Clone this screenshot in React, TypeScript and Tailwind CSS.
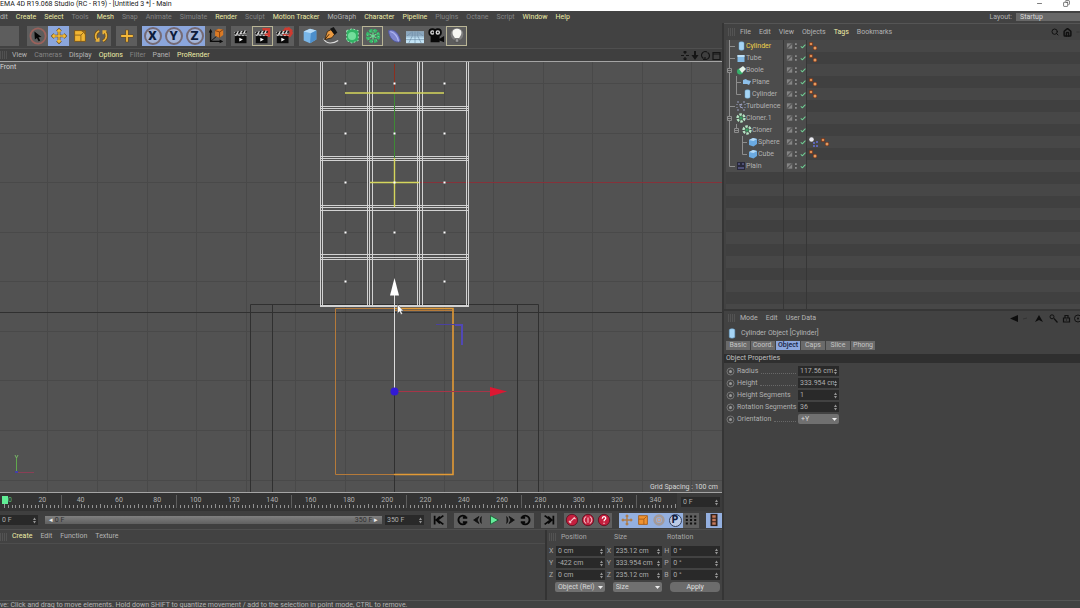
import { useState } from 'react'
import type { ReactNode } from 'react'
import { Check, Copy, House, Minus, Search } from 'lucide-react'
import clsx from 'clsx'

interface MenuEntry {
  label: string
  tone?: 'hot' | 'dim'
}

interface SceneObject {
  name: string
  icon: string
  depth: number
  tags?: string
  open?: boolean
}

const mainMenu: MenuEntry[] = [
  { label: 'Edit' },
  { label: 'Create', tone: 'hot' },
  { label: 'Select', tone: 'hot' },
  { label: 'Tools', tone: 'dim' },
  { label: 'Mesh', tone: 'hot' },
  { label: 'Snap', tone: 'dim' },
  { label: 'Animate', tone: 'dim' },
  { label: 'Simulate', tone: 'dim' },
  { label: 'Render', tone: 'hot' },
  { label: 'Sculpt', tone: 'dim' },
  { label: 'Motion Tracker', tone: 'hot' },
  { label: 'MoGraph' },
  { label: 'Character', tone: 'hot' },
  { label: 'Pipeline', tone: 'hot' },
  { label: 'Plugins', tone: 'dim' },
  { label: 'Octane', tone: 'dim' },
  { label: 'Script', tone: 'dim' },
  { label: 'Window', tone: 'hot' },
  { label: 'Help', tone: 'hot' },
]

const viewMenu: MenuEntry[] = [
  { label: 'View' },
  { label: 'Cameras', tone: 'dim' },
  { label: 'Display' },
  { label: 'Options', tone: 'hot' },
  { label: 'Filter', tone: 'dim' },
  { label: 'Panel' },
  { label: 'ProRender', tone: 'hot' },
]

const sceneObjects: SceneObject[] = [
  { name: 'Cylinder', icon: 'cylinder', depth: 0, tags: 'phong' },
  { name: 'Tube', icon: 'tube', depth: 0, tags: 'phong' },
  { name: 'Boole', icon: 'boole', depth: 0, open: true },
  { name: 'Plane', icon: 'plane', depth: 1, tags: 'phong' },
  { name: 'Cylinder', icon: 'cylinder', depth: 1, tags: 'phong' },
  { name: 'Turbulence', icon: 'turbulence', depth: 0 },
  { name: 'Cloner.1', icon: 'cloner', depth: 0, open: true },
  { name: 'Cloner', icon: 'cloner', depth: 1, open: true },
  { name: 'Sphere', icon: 'cube', depth: 2, tags: 'dynamics' },
  { name: 'Cube', icon: 'cube', depth: 2, tags: 'phong' },
  { name: 'Plain', icon: 'plain', depth: 0 },
]

const Grip = () => (
  <svg className="h-2 w-2 shrink-0" viewBox="0 0 8 8" aria-hidden="true">
    <path d="M0 1h8M0 3h8M0 5h8M0 7h8" stroke="#656565" strokeDasharray="1 1" />
  </svg>
)

const MenuItems = ({ items }: { items: MenuEntry[] }) => (
  <>
    {items.map((item) => (
      <button
        key={item.label}
        className={clsx(
          'shrink-0 whitespace-nowrap',
          item.tone === 'hot' && 'text-[#eeeda8]',
          item.tone === 'dim' && 'text-[#858585]',
          !item.tone && 'text-[#b4b4b4]'
        )}
      >
        {item.label}
      </button>
    ))}
  </>
)

// ---------- Toolbar ----------

const Clapper = ({ children }: { children?: ReactNode }) => (
  <>
    {children}
    <path d="M2 10h13v8H2z" fill="#0b0b0b" />
    <path d="M1.500 5.500l13-1.500.4 3-13 1.800z" fill="#ddd" />
    <path d="M2 8l2-2.800M6 7.500l2-3M10 7l2-3M14 6.500l1-2" stroke="#111" strokeWidth="1.700" />
    <path d="M2 9.500h13" stroke="#ccc" strokeDasharray="2 2" />
    <path d="M7 12l4 2-4 2z" fill="#fff" />
  </>
)

const moveGlyph = 'M10 3v14M3 10h14M8 5l2-2 2 2M8 15l2 2 2-2M5 8l-2 2 2 2M15 8l2 2-2 2'

const toolIcons: Record<string, ReactNode> = {
  select: (
    <>
      <circle cx="10" cy="10" r="8.500" fill="none" stroke="#9a625c" strokeWidth="2" />
      <path d="M6 5l8 6-3.500.4 2 3.600-1.800.9-1.900-3.700L6.500 14z" fill="#050505" />
    </>
  ),
  move: (
    <>
      <path d={moveGlyph} fill="none" stroke="#6b4a14" strokeWidth="3" />
      <path d={moveGlyph} fill="none" stroke="#f4bd3c" strokeWidth="1.600" />
    </>
  ),
  scale: (
    <>
      <path d="M4 4h12v12H4z" fill="#f2b632" stroke="#7b5518" />
      <path d="M4 9h7v7M11 9l4-4M12 5h3v3" fill="none" stroke="#8b621c" />
    </>
  ),
  rotate: (
    <>
      <path d="M8 4.500A6 6 0 0 0 6.500 15M12 15.500A6 6 0 0 0 13.500 5" fill="none" stroke="#6b4a14" strokeWidth="3.400" />
      <path d="M8 4.500A6 6 0 0 0 6.500 15M12 15.500A6 6 0 0 0 13.500 5M4 15.500h3.500V12M16 4.500h-3.500V8" fill="none" stroke="#e9b23a" strokeWidth="1.800" />
    </>
  ),
  plus: (
    <>
      <path d="M10 3v14M3 10h14" stroke="#6b4a14" strokeWidth="3.600" />
      <path d="M10 3.500v13M3.500 10h13" stroke="#f4b83a" strokeWidth="2" />
    </>
  ),
  coords: (
    <>
      <path d="M4 4v12h12" fill="none" stroke="#0b0b0b" strokeWidth="1.600" />
      <path d="M2 6l2-4 2 4zM14 14l4 2-4 2z" fill="#0b0b0b" />
      <path d="M4 16l7-6" stroke="#0b0b0b" />
      <path d="M9 4l4-2 5 1v6l-4 3-5-2z" fill="#dc7b25" />
      <path d="M9 4l5 1.500V12M14 5.500L18 3" fill="none" stroke="#7d3b0d" />
    </>
  ),
  render: <Clapper />,
  renderPv: (
    <Clapper>
      <path d="M9 1h9v10h-5z" fill="#cf3b30" />
    </Clapper>
  ),
  renderSettings: (
    <Clapper>
      <circle cx="14" cy="6" r="4" fill="none" stroke="#cf3b30" strokeWidth="3" />
      <circle cx="14" cy="6" r="5.500" fill="none" stroke="#cf3b30" strokeDasharray="2 2.300" />
    </Clapper>
  ),
  cube: (
    <>
      <path d="M3 5l7-3 7 2v10l-7 4-7-3z" fill="#79b6e8" />
      <path d="M3 5l7-3 7 2-6 3z" fill="#b8dcf8" />
      <path d="M11 7l6-3v10l-7 4z" fill="#4c8fcc" />
    </>
  ),
  pen: (
    <>
      <path d="M2 13c2 6 10 6 16 2" fill="none" stroke="#ddd" strokeWidth="1.200" />
      <path d="M3 14L6 5l4-2 4 5-3 4z" fill="#eb9b42" stroke="#2a1a0a" strokeWidth=".8" />
      <path d="M9 2l4-2 4 6-3 3z" fill="#151515" />
      <path d="M3 14l5-6" stroke="#2a1a0a" />
    </>
  ),
  subdiv: (
    <>
      <path d="M4 4l6-2 7 2v11l-7 3-6-3z" fill="#31b364" stroke="#a6dfba" strokeDasharray="2 2" />
      <circle cx="10" cy="10" r="4.500" fill="#73dd9b" />
    </>
  ),
  array: (
    <>
      <circle cx="10" cy="10" r="6" fill="none" stroke="#35b868" strokeWidth="4" strokeDasharray="3.500 1.200" />
      <circle cx="10" cy="10" r="6" fill="none" stroke="#9be8b4" strokeDasharray="1 3.700" />
      <path d="M10 6v8M6.500 8l7 4M13.500 8l-7 4" stroke="#6adb92" strokeWidth="1.400" />
    </>
  ),
  deformer: (
    <>
      <path d="M4 4c6-3 13 5 13 12-6 3-13-4-13-12z" fill="#7e86cf" stroke="#5057a0" />
      <path d="M6 5c6 2 8 6 9 11" fill="none" stroke="#b1b7f0" strokeWidth="1.300" />
    </>
  ),
  floor: (
    <>
      <path d="M0 5h20v13H0z" fill="#c3e4f6" />
      <path d="M0 5h20v5H0z" fill="#8ba7be" />
      <path d="M0 11h20M0 14h20M7 5v5l-4 8M13 5v5l4 8M10 5v13M1 10l5-4M19 10l-5-4" fill="none" stroke="#6d8ca6" strokeWidth=".7" />
    </>
  ),
  camera: (
    <>
      <circle cx="6" cy="6" r="3.500" fill="#ddd" stroke="#080808" strokeWidth="2" />
      <circle cx="12" cy="6" r="3.500" fill="#ddd" stroke="#080808" strokeWidth="2" />
      <path d="M4 10h10v7H4zM14 13l5-3v7l-5-2z" fill="#080808" />
      <circle cx="6" cy="6" r="1" fill="#111" />
      <circle cx="12" cy="6" r="1" fill="#111" />
    </>
  ),
  light: (
    <>
      <circle cx="10" cy="8" r="7" fill="#808080" />
      <path d="M10 2c-6 0-6 6-3 9l1 2h4l1-2c3-3 3-9-3-9z" fill="#f6f6f2" />
      <path d="M8 13h4v4H8z" fill="#999" stroke="#444" strokeWidth=".8" />
    </>
  ),
}

interface Tool {
  id: string
  active?: boolean
  framed?: boolean
}

const toolGroups: Tool[][] = [
  [{ id: 'select' }, { id: 'move', active: true }, { id: 'scale' }, { id: 'rotate' }],
  [{ id: 'plus' }],
  [{ id: 'X', active: true }, { id: 'Y', active: true }, { id: 'Z', active: true }, { id: 'coords' }],
  [{ id: 'render' }, { id: 'renderPv', framed: true }, { id: 'renderSettings' }],
  [
    { id: 'cube' },
    { id: 'pen' },
    { id: 'subdiv' },
    { id: 'array', framed: true },
    { id: 'deformer' },
    { id: 'floor' },
    { id: 'camera' },
    { id: 'light', framed: true },
  ],
]

const ToolButton = ({ id, active, framed }: Tool) => (
  <button
    aria-label={id}
    className={clsx(
      'flex h-5 w-[21px] items-center justify-center border',
      active ? 'bg-[#8ba6dc]' : 'bg-[#5d5d5d]',
      framed ? 'border-[#b9b596]' : active ? 'border-[#8ba6dc]' : 'border-[#5d5d5d]'
    )}
  >
    {toolIcons[id] ? (
      <svg className="h-[18px] w-[18px]" viewBox="0 0 20 20">
        {toolIcons[id]}
      </svg>
    ) : (
      <span className="flex h-[18px] w-[18px] items-center justify-center rounded-full border-2 border-[#756a74] bg-[#a3b4d8] text-[13px] leading-none font-black text-[#0c1c3c]">
        {id}
      </span>
    )}
  </button>
)

const Toolbar = () => (
  <div className="flex h-[26px] shrink-0 items-center border-b border-[#4f4f4f]">
    <div className="mr-2 h-5 w-[19px] bg-[#5d5d5d]" />
    <div className="flex gap-[5px]">
      {toolGroups.map((group, i) => (
        <div key={i} className="flex">
          {group.map((tool) => (
            <ToolButton key={tool.id} {...tool} />
          ))}
        </div>
      ))}
    </div>
  </div>
)

// ---------- Viewport ----------

const gridX = [47, 97, 147, 196, 246, 295, 345, 394, 444, 493, 543, 592, 642, 691]
const gridY = [83, 133, 182, 232, 281, 331, 380, 430, 480]
const cellX = [320, 322, 367, 369, 372, 417, 419, 422, 466, 468]
const cellY = [106, 108, 110, 156, 158, 160, 205, 207, 210, 254, 257, 259, 305, 306]

const Viewport = () => (
  <div className="relative min-h-0 flex-1 border-y border-[#a5a5a5] bg-[#525252]">
    <svg className="absolute inset-0 h-full w-full" viewBox="0 62 722 430" preserveAspectRatio="xMidYMid slice">
      <g stroke="#494949">
        {gridX.map((x) => (
          <path key={x} d={`M${x + 0.5} 0V600`} />
        ))}
        {gridY.map((y) => (
          <path key={y} d={`M0 ${y + 0.5}H722`} />
        ))}
      </g>
      <path d="M0 312.500H722M394.500 392V600" stroke="#303030" />
      <path d="M250.500 600V304.500H538.500V600M272.500 304V600M517.500 304V600" fill="none" stroke="#303030" />
      <path d="M419 182.500H722" stroke="#85323a" />

      {/* cloned cubes */}
      <g stroke="#d2d2d2">
        {cellX.map((x) => (
          <path key={x} d={`M${x + 0.5} 0V306`} />
        ))}
        {cellY.map((y) => (
          <path key={y} d={`M320 ${y + 0.5}H469`} />
        ))}
      </g>

      {/* effector axes */}
      <path d="M394.500 64V92" stroke="#8c2f20" />
      <path d="M394.500 93V158" stroke="#3f8a35" />
      <path d="M345 93H444M394.500 158V207M370 182.500H419" stroke="#d5d65c" strokeWidth="1.400" />
      {[83, 133, 182, 232, 281].map((y) =>
        [345, 394, 444].map((x) =>
          x === 394 && y === 281 ? null : <rect key={`${x}-${y}`} x={x - 0.5} y={y - 0.5} width="2" height="2" fill="#fff" />
        )
      )}

      {/* selected cylinder */}
      <path d="M394 308.500H335.500V474.500H394" fill="none" stroke="#b57a3a" />
      <path d="M394 308.500H453V474.500H394" fill="none" stroke="#e39a35" strokeWidth="1.600" />
      <path d="M394 310.500H452" stroke="#b57a3a" />
      <path d="M436 324.500H462" stroke="#4a41a0" />
      <path d="M455 325H462V345" fill="none" stroke="#5148b5" strokeWidth="2" />

      {/* move gizmo */}
      <path d="M394.500 295V388" stroke="#dcdcdc" />
      <path d="M394.500 278L390 295.500H399z" fill="#fff" />
      <path d="M398 391.500H491" stroke="#a63548" />
      <path d="M490 387L507 391.500L490 396.500z" fill="#dc1732" />
      <circle cx="394.500" cy="391.500" r="4" fill="#321ad5" />
      <path d="M397.500 304.500v9l2-2 1.500 3 1.500-.8-1.500-2.700h2.500z" fill="#fff" stroke="#555" strokeWidth=".5" />

      {/* world axis */}
      <path d="M16.500 457V471" stroke="#61a84d" />
      <path d="M15 455l1.500 3 1.500-3" fill="none" stroke="#79b568" />
      <path d="M18 472.500H34" stroke="#8a3f56" />
      <path d="M15 472h3" stroke="#4141a8" strokeWidth="2" />
    </svg>
    <div className="relative flex h-full flex-col justify-between text-[#d6d6d6]">
      <span className="pt-px leading-[9px]">Front</span>
      <span className="self-end pr-1 leading-[9px]">Grid Spacing : 100 cm</span>
    </div>
  </div>
)

const viewNav = (
  <svg className="mr-px h-[9px] w-10 shrink-0" viewBox="0 0 40 9" fill="none" stroke="#151515" strokeWidth="1.200">
    <path d="M4 0v3M4 6v3M0 4.500h3M5 4.500h3M2.500 1.500L4 0l1.500 1.500M2.500 7.500L4 9l1.500-1.500" />
    <path d="M14 0v4" strokeWidth="2" />
    <path d="M10.500 4h7L14 9z" fill="#151515" stroke="none" />
    <path d="M26 1A3.500 3.500 0 0 0 22.500 7.500M22 8.500h2V6M23 8A3.500 3.500 0 0 0 26.500 1.500" />
    <path d="M32 1.500h7v7h-7zM32 3h7" />
  </svg>
)

// ---------- Fields ----------

const Spinner = () => (
  <svg className="h-[7px] w-[3px] shrink-0" viewBox="0 0 3 7" fill="#969696">
    <path d="M0 3L1.500.5 3 3zM0 4h3L1.500 6.500z" />
  </svg>
)

const NumberField = ({ id, label, value }: { id: string; label?: string; value: string }) => (
  <span className="flex h-[10px] min-w-0 flex-1 items-center bg-[#292929] px-[2px]">
    <input id={id} aria-label={label} defaultValue={value} className="h-[9px] w-full min-w-0 bg-transparent text-[#adadad] outline-none" />
    <Spinner />
  </span>
)

const SelectField = ({ id, label, options }: { id: string; label?: string; options: string[] }) => (
  <span className="relative flex h-[10px] min-w-0 flex-1 items-center rounded-xs bg-[#707070]">
    <select id={id} aria-label={label} className="h-[10px] w-full appearance-none px-[3px] leading-[10px] text-[#d8d8d8]">
      {options.map((option) => (
        <option key={option}>{option}</option>
      ))}
    </select>
    <svg className="pointer-events-none absolute right-[2px] h-[3px] w-[5px]" viewBox="0 0 5 3">
      <path d="M0 0h5L2.500 3z" fill="#eee" />
    </svg>
  </span>
)

// ---------- Timeline ----------

const frameX = (frame: number) => 4 + frame * 1.916

const TimeRuler = () => (
  <div className="flex h-[18px] shrink-0 items-center gap-1 bg-[#3b3b3b] pr-[2px]">
    <svg className="h-full min-w-0 flex-1 bg-[#333333]">
      {Array.from({ length: 176 }, (_, i) => (
        <path key={i} d={`M${Math.round(frameX(i * 2)) + 0.5} ${i % 5 === 0 ? 11 : 12}V15`} stroke="#929292" />
      ))}
      {[30, 90, 150, 210, 270, 330].map((frame) => (
        <path key={frame} d={`M${Math.round(frameX(frame)) + 0.5} 2V15`} stroke="#5e5e5e" />
      ))}
      <rect x="2" y="3" width="6" height="8" fill="#61ee96" />
      <text x="10" y="9" textAnchor="middle" fill="#55bd79">0</text>
      {Array.from({ length: 17 }, (_, i) => (i + 1) * 20).map((frame) => (
        <text key={frame} x={frameX(frame)} y="9" textAnchor="middle" fill="#b0b0b0">
          {frame}
        </text>
      ))}
    </svg>
    <div className="flex w-[39px]">
      <NumberField id="frame-now" label="Current frame" value="0 F" />
    </div>
  </div>
)

const transportIcons: Record<string, ReactNode> = {
  start: <path d="M3 3v10M13 3L6 8l7 5M9 4L5 8l4 4" fill="none" stroke="#080808" strokeWidth="2" />,
  prevKey: <path d="M12.500 4.500A5 5 0 1 0 12.500 11.500M9 5.500h5M9 10.500h5" fill="none" stroke="#080808" strokeWidth="2.200" />,
  prev: <path d="M9 4L3 8l6 4-2-4zM12 4c-2 2-2 6 0 8" fill="#111" stroke="#111" />,
  play: <path d="M4 3l9 5-9 5z" fill="#64ec9a" stroke="#1b5a34" />,
  next: <path d="M7 4l6 4-6 4 2-4zM4 4c2 2 2 6 0 8" fill="#111" stroke="#111" />,
  nextKey: <path d="M3.500 4.500A5 5 0 1 1 3.500 11.500M7 5.500H2M7 10.500H2" fill="none" stroke="#080808" strokeWidth="2.200" />,
  end: <path d="M13 3v10M3 3l7 5-7 5M7 4l4 4-4 4" fill="none" stroke="#080808" strokeWidth="2" />,
  record: (
    <>
      <circle cx="8" cy="8" r="6.500" fill="#c51f3e" stroke="#5e1020" />
      <path d="M5 11l6-6M4.500 9l2.500 2.500M10 5l2 2" stroke="#f5c9cf" strokeWidth="1.400" />
    </>
  ),
  autokey: (
    <>
      <circle cx="8" cy="8" r="6.500" fill="#c51f3e" stroke="#5e1020" />
      <path d="M6 4a4.500 4.500 0 0 0 0 8M10 4a4.500 4.500 0 0 1 0 8M8 5v6" fill="none" stroke="#f2b4bd" strokeWidth="1.300" />
    </>
  ),
  keySelect: (
    <>
      <circle cx="8" cy="8" r="6.500" fill="#c51f3e" stroke="#5e1020" />
      <path d="M6 6.500c0-3 4-3 4-.5 0 1.500-2 1.500-2 3.500M8 11v1.400" fill="none" stroke="#fff" strokeWidth="1.400" />
    </>
  ),
  position: <path d="M8 2v12M2 8h12M6.500 4L8 2.500 9.500 4M6.500 12L8 13.500 9.500 12M4 6.500L2.500 8 4 9.500M12 6.500L13.500 8 12 9.500" fill="none" stroke="#b07c48" strokeWidth="1.600" />,
  size: <path d="M3 3h10v10H3zM3 7h6v6M9 7l3-3" fill="#ef9230" stroke="#a35a18" />,
  rotation: (
    <>
      <circle cx="8" cy="8" r="5" fill="none" stroke="#a39a9a" strokeWidth="3" />
      <circle cx="8" cy="8" r="2" fill="none" stroke="#c9a083" strokeWidth="1.400" />
    </>
  ),
  points: <path d="M2 4h12M2 8h12M2 12h12" stroke="#111" strokeWidth="2.400" strokeDasharray="2.400 2.400" />,
  film: (
    <>
      <path d="M4 1h8v14H4z" fill="#33221c" />
      <path d="M6 2.500h4v3H6zM6 6.500h4v3H6zM6 10.500h4v3H6z" fill="#c5795a" />
    </>
  ),
}

const transportGroups = [
  ['start'],
  ['prevKey', 'prev', 'play', 'next', 'nextKey'],
  ['end'],
  ['record', 'autokey', 'keySelect'],
  ['position', 'size', 'rotation', 'P', 'points'],
  ['film'],
]

const blueKeys = ['position', 'size', 'rotation', 'P', 'film']

const Transport = () => (
  <div className="flex h-[18px] shrink-0 items-center gap-[7px] bg-[#3f3f3f]">
    <div className="flex w-[38px]">
      <NumberField id="frame-start" label="First frame" value="0 F" />
    </div>
    <div className="-mr-1 flex h-2 min-w-0 flex-1 items-center justify-between bg-gradient-to-b from-[#808080] to-[#606060] px-1 text-[#303030]">
      <button className="leading-2"><span className="text-[#eee]">◂</span> 0 F</button>
      <button className="leading-2">350 F <span className="text-[#eee]">▸</span></button>
    </div>
    <div className="flex w-[39px]">
      <NumberField id="frame-end" label="Last frame" value="350 F" />
    </div>
    {transportGroups.map((group) => (
      <div key={group[0]} className="flex">
        {group.map((id) => (
          <button
            key={id}
            aria-label={id}
            className={clsx('flex h-[15px] w-4 items-center justify-center', blueKeys.includes(id) ? 'bg-[#94b0e0]' : 'bg-[#5f5f5f]')}
          >
            {id === 'P' ? (
              <span className="flex h-[13px] w-[13px] items-center justify-center rounded-full border border-[#34405e] bg-[#bdcbe6] text-[10px] leading-none font-black text-[#101e42]">P</span>
            ) : (
              <svg className="h-[14px] w-[14px]" viewBox="0 0 16 16">{transportIcons[id]}</svg>
            )}
          </button>
        ))}
      </div>
    ))}
  </div>
)

// ---------- Bottom panels ----------

const coordRows = [
  [['X', '0 cm'], ['X', '235.12 cm'], ['H', '0 °']],
  [['Y', '-422 cm'], ['Y', '333.954 cm'], ['P', '0 °']],
  [['Z', '0 cm'], ['Z', '235.12 cm'], ['B', '0 °']],
]

const Coordinates = () => (
  <div className="w-[177px] shrink-0 border-l-2 border-[#333333] px-[2px] text-[#a8a8a8]">
    <div className="grid h-[14px] grid-cols-3 items-center">
      <span className="flex items-center gap-1"><Grip />Position</span>
      <span className="pl-2">Size</span>
      <span className="pl-1">Rotation</span>
    </div>
    <div className="mt-px grid grid-cols-3 gap-x-[2px]">
      {coordRows.flatMap((row, r) =>
        row.map(([axis, value], c) => (
          <div key={`${r}-${c}`} className="flex h-3 items-center gap-[2px]">
            <label htmlFor={`coord-${r}-${c}`} className="w-[5px]">{axis}</label>
            <NumberField id={`coord-${r}-${c}`} value={value} />
          </div>
        ))
      )}
    </div>
    <div className="grid grid-cols-3 gap-x-[2px] pt-px">
      <div className="flex pl-[6px]"><SelectField id="coord-space" label="Coordinate space" options={['Object (Rel)', 'Object (Abs)', 'World']} /></div>
      <div className="flex pl-[6px]"><SelectField id="size-mode" label="Size mode" options={['Size', 'Scale', 'Size +']} /></div>
      <div className="flex pl-[6px]"><button className="h-[10px] flex-1 rounded-sm bg-[#6c6c6c] leading-[10px] text-[#e0e0e0]">Apply</button></div>
    </div>
  </div>
)

// ---------- Object manager ----------

const treeIcons: Record<string, ReactNode> = {
  cylinder: <path d="M3 1.500c1-1 4-1 5 0v7c-1 1-4 1-5 0z" fill="#a6d5f5" stroke="#6ca4cf" strokeWidth=".5" />,
  tube: (
    <>
      <path d="M1.500 2h7v7h-7z" fill="#83bce8" />
      <path d="M1.500 2h7v2h-7z" fill="#bfe0f6" />
    </>
  ),
  boole: (
    <>
      <circle cx="4" cy="6.500" r="3" fill="#35b06a" />
      <path d="M3 4l4-3 3 3-4 4z" fill="#e6f4ea" />
    </>
  ),
  plane: <path d="M1 3l3-1 1 1 4 1-2 4-2-1-4 0z" fill="#8dbfe9" />,
  turbulence: <path d="M1 1h2M7 1h2M1 9h2M7 9h2M3 4l3-1-2 3 3 1M1 3v1M9 3v1M1 6v1M9 6v1" fill="none" stroke="#9a9fc0" />,
  cloner: (
    <>
      <circle cx="5" cy="5" r="3.500" fill="none" stroke="#b4e2c2" strokeWidth="2.400" strokeDasharray="2.500 1.100" />
      <circle cx="5" cy="5" r="1.800" fill="#3a9a60" />
    </>
  ),
  cube: (
    <>
      <path d="M1 3l4-2 4 1v5L5.500 9.500 1 8z" fill="#6aa9e0" />
      <path d="M1 3l4-2 4 1-3.500 2z" fill="#b5daf6" />
    </>
  ),
  plain: (
    <>
      <path d="M1 1h8v8H1z" fill="#29293a" />
      <path d="M2 3h2M6 3h2M2 7h6" stroke="#777ab5" />
    </>
  ),
}

// last child rows close their branch with a corner
const branchPaths = [
  'M3.500 0V12M3.500 6.500H9',
  'M3.500 0V12M3.500 6.500H9',
  'M3.500 0V12',
  'M3.500 0V12M10.500 0V12M10.500 6.500H15',
  'M3.500 0V12M10.500 0V6.500H15',
  'M3.500 0V12M3.500 6.500H9',
  'M3.500 0V12',
  'M3.500 0V12M10.500 0V6',
  'M3.500 0V12M16.500 0V12M16.500 6.500H21',
  'M3.500 0V12M16.500 0V6.500H21',
  'M3.500 0V6.500H9',
]

const PhongTag = () => (
  <svg className="h-[9px] w-[9px]" viewBox="0 0 9 9">
    <path d="M0 0h4v4H0zM4 4h4v4H4z" fill="#6b3a26" />
    <circle cx="2" cy="2" r="1.300" fill="#df8d50" />
    <circle cx="6" cy="6" r="1.500" fill="#e79a5c" />
  </svg>
)

const TreeRow = ({ object, index, selected, onSelect }: { object: SceneObject; index: number; selected: boolean; onSelect: () => void }) => (
  <div className={clsx('flex h-3 shrink-0 items-center', index % 2 ? 'bg-[#404040]' : 'bg-[#474747]')}>
    <div className="flex h-3 w-[57px] shrink-0 items-center bg-[#4c4c4c]">
      <svg
        className={clsx('h-3 shrink-0', object.depth === 0 && 'w-[10px]', object.depth === 1 && 'w-4', object.depth === 2 && 'w-[22px]')}
        fill="none"
        stroke="#8d8d8d"
      >
        <path d={branchPaths[index]} />
        {object.open && <path d={object.depth ? 'M8.500 4.500h4v4h-4zM9 6.500h3' : 'M1.500 4.500h4v4h-4zM2 6.500h3'} fill="#4c4c4c" />}
      </svg>
      <svg className="h-[10px] w-[10px] shrink-0" viewBox="0 0 10 10">{treeIcons[object.icon]}</svg>
      <button onClick={onSelect} className={clsx('whitespace-nowrap', selected ? 'text-[#efd04a]' : 'text-[#b2b2b2]')}>
        {object.name}
      </button>
    </div>
    <div className="flex h-3 w-6 shrink-0 items-center gap-[2px] border-x border-[#363636] bg-[#4c4c4c] pl-[2px]">
      <svg className="h-2 w-2" viewBox="0 0 8 8">
        <path d="M1 1h6v6H1z" fill="#858585" />
        <path d="M1 7l6-6" stroke="#5b5b5b" strokeWidth="1.500" />
      </svg>
      <svg className="h-2 w-[3px]" viewBox="0 0 3 8" fill="#8d8d8d">
        <path d="M0 1h2v2H0zM0 5h2v2H0z" />
      </svg>
      <Check className="h-[7px] w-[7px] text-[#70cf94]" strokeWidth={4} />
    </div>
    <div className="flex items-center gap-[2px] pl-[2px]">
      {object.tags === 'dynamics' && (
        <svg className="h-[10px] w-[10px]" viewBox="0 0 10 10">
          <path d="M4 5h2v2H4zM7 4h2v2H7zM4 8h2v2H4zM7 8h2v2H7z" fill="#5c66b5" />
          <circle cx="2.500" cy="2.500" r="2.300" fill="#e8e8ef" />
        </svg>
      )}
      {object.tags && <PhongTag />}
    </div>
  </div>
)

const ObjectManager = () => {
  const [selected, setSelected] = useState(0)

  return (
    <div className="flex h-[286px] shrink-0 flex-col border-t border-[#555555]">
      <div className="flex h-4 shrink-0 items-center gap-2 pl-1">
        <span className="-mr-1 flex"><Grip /></span>
        <MenuItems items={[{ label: 'File' }, { label: 'Edit' }, { label: 'View' }, { label: 'Objects' }, { label: 'Tags', tone: 'hot' }, { label: 'Bookmarks' }]} />
        <span className="flex-1" />
        <div className="flex items-center gap-1">
          <Search className="h-2 w-2 text-[#111]" strokeWidth={3} />
          <House className="h-[9px] w-[9px] text-[#111]" strokeWidth={4} />
          <Minus className="h-2 w-1 text-[#111]" />
        </div>
      </div>
      <div className="flex min-h-0 flex-1 flex-col overflow-hidden pl-[2px]">
        {sceneObjects.map((object, i) => (
          <TreeRow key={i} object={object} index={i} selected={selected === i} onSelect={() => setSelected(i)} />
        ))}
        {Array.from({ length: 12 }, (_, i) => (
          <div key={i} className={clsx('flex h-3 shrink-0', i % 2 ? 'bg-[#474747]' : 'bg-[#404040]')}>
            <span className="w-[57px]" />
            <span className="w-6 border-x border-[#363636]" />
          </div>
        ))}
      </div>
    </div>
  )
}

// ---------- Attributes ----------

const attributes = [
  { id: 'radius', label: 'Radius', value: '117.56 cm' },
  { id: 'height', label: 'Height', value: '333.954 cm' },
  { id: 'height-seg', label: 'Height Segments', value: '1' },
  { id: 'rotation-seg', label: 'Rotation Segments', value: '36' },
  { id: 'orientation', label: 'Orientation', options: ['+Y', '-Y', '+X', '-X', '+Z', '-Z'] },
]

const tabs = ['Basic', 'Coord.', 'Object', 'Caps', 'Slice', 'Phong']

const AttributeManager = () => {
  const [tab, setTab] = useState('Object')

  return (
    <div className="min-h-0 flex-1 border-t-2 border-[#363636]">
      <div className="flex h-[14px] items-center gap-2 pl-1">
        <span className="-mr-1 flex"><Grip /></span>
        <MenuItems items={[{ label: 'Mode' }, { label: 'Edit' }, { label: 'User Data' }]} />
        <span className="flex-1" />
        <svg className="h-[9px] w-[72px]" viewBox="0 0 72 9">
          <path d="M2 4.500L10 1v7zM27 8l4-7 4 7-4-2z" fill="#0d0d0d" />
          <path d="M15 5l4-1" stroke="#333" />
          <path d="M46 4.500l3.500 4M55.500 4h6v4h-6zM57 4V1.500h3V4M58.500 5.500v1" fill="none" stroke="#111" strokeWidth="1.200" />
          <circle cx="44" cy="2.800" r="2" fill="none" stroke="#111" />
          <circle cx="70" cy="4.500" r="3.500" fill="none" stroke="#111" />
          <circle cx="70" cy="4.500" r="1" fill="#111" />
        </svg>
      </div>
      <div className="flex h-4 items-center gap-1 pl-[2px] text-[#b5b5b5]">
        <svg className="h-[11px] w-[11px]" viewBox="0 0 10 10">{treeIcons.cylinder}</svg>
        Cylinder Object [Cylinder]
      </div>
      <div className="flex gap-px pl-[2px]" role="tablist">
        {tabs.map((name) => (
          <button
            key={name}
            role="tab"
            aria-selected={tab === name}
            onClick={() => setTab(name)}
            className={clsx('h-[9px] w-6 leading-[9px]', tab === name ? 'bg-[#8ba6dc] font-medium text-[#14213f]' : 'bg-[#6a6a6a] text-[#c4c4c4]')}
          >
            {name}
          </button>
        ))}
      </div>
      <h2 className="mt-1 h-[9px] bg-[#2f2f2f] pl-[2px] leading-[9px] text-[#c0c0c0]">Object Properties</h2>
      <div className="pt-[2px] pl-[2px]">
        {attributes.map((attr) => (
          <div key={attr.id} className="flex h-3 items-center">
            <svg className="mr-[2px] h-[9px] w-[9px]" viewBox="0 0 9 9">
              <circle cx="4.500" cy="4.500" r="3.500" fill="none" stroke="#777" />
              <circle cx="4.500" cy="4.500" r="1.500" fill="#999" />
            </svg>
            <label htmlFor={attr.id} className="flex w-[61px] gap-[3px] overflow-hidden whitespace-nowrap text-[#b0b0b0]">
              {attr.label}
              {!attr.label.includes('Segments') && <span className="mr-[2px] mb-[2px] min-w-0 flex-1 border-b border-dotted border-[#686868]" />}
            </label>
            <div className="flex w-[41px]">
              {attr.options ? <SelectField id={attr.id} options={attr.options} /> : <NumberField id={attr.id} value={attr.value ?? ''} />}
            </div>
          </div>
        ))}
      </div>
    </div>
  )
}

export default function App() {
  return (
    <div className="flex h-screen flex-col overflow-hidden bg-[#424242] font-['Roboto',sans-serif] text-[7px] leading-[9px] text-[#b4b4b4]">
      <header className="flex h-[11px] shrink-0 items-center justify-between bg-white text-[#202020]">
        <h1 className="pb-[2px]">EMA 4D R19.068 Studio (RC - R19) - [Untitled 3 *] - Main</h1>
        <div className="flex gap-5 pr-[10px] pb-1">
          <button aria-label="Minimize"><Minus className="h-[7px] w-[7px]" /></button>
          <button aria-label="Restore"><Copy className="h-[7px] w-[7px] -scale-x-100" /></button>
        </div>
      </header>

      <nav className="flex h-3 shrink-0 items-center justify-between">
        <div className="-ml-1 flex gap-2">
          <MenuItems items={mainMenu} />
        </div>
        <div className="flex items-center gap-1">
          <label htmlFor="layout">Layout:</label>
          <select id="layout" className="h-2 w-16 appearance-none bg-[#686868] px-1 leading-2 text-[#d8d8d8]">
            <option>Startup</option>
            <option>Standard</option>
          </select>
        </div>
      </nav>

      <main className="grid min-h-0 flex-1 grid-cols-[361fr_179fr]">
        <section className="flex min-h-0 min-w-0 flex-col">
          <Toolbar />
          <div className="flex h-3 shrink-0 items-center justify-between bg-[#3f3f3f]">
            <div className="flex items-center gap-[7px]">
              <span className="-mr-[3px] flex"><Grip /></span>
              <MenuItems items={viewMenu} />
            </div>
            {viewNav}
          </div>
          <Viewport />
          <TimeRuler />
          <Transport />
          <div className="flex h-[71px] shrink-0 border-t border-[#4f4f4f]">
            <div className="min-w-0 flex-1">
              <div className="flex h-[14px] items-center gap-2 border-b border-[#4d4d4d]">
                <span className="-mr-1 flex"><Grip /></span>
                <MenuItems items={[{ label: 'Create', tone: 'hot' }, { label: 'Edit' }, { label: 'Function' }, { label: 'Texture' }]} />
              </div>
            </div>
            <Coordinates />
          </div>
        </section>
        <aside className="flex min-h-0 min-w-0 flex-col border-l-2 border-[#353535]">
          <ObjectManager />
          <AttributeManager />
        </aside>
      </main>

      <footer className="h-2 shrink-0 border-t border-[#555555] whitespace-nowrap">
        ve: Click and drag to move elements. Hold down SHIFT to quantize movement / add to the selection in point mode, CTRL to remove.
      </footer>
    </div>
  )
}
